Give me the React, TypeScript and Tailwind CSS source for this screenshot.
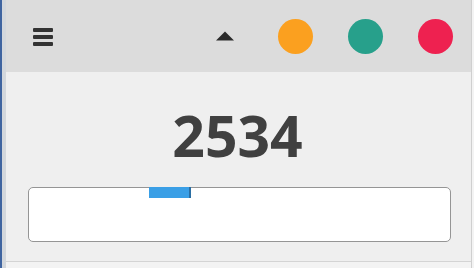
import React from "react";

export default function App() {
  return (
    <div className="flex w-[474px] h-[268px] overflow-hidden bg-[#f3f3f3]" style={{ fontFamily: '"Open Sans", "Noto Sans", sans-serif' }}>
      <div className="w-[2px] h-full bg-[#3f64a0]" />
      <div className="w-[4px] h-full bg-[#d3d7dc]" />
      <div className="flex flex-col w-[466px] h-full border-r border-[#cfcfcf]">
        <div className="flex items-center h-[72px] bg-[#dcdcdc] pl-[27px] pr-[18px]">
          <div className="flex flex-col gap-[3px] mt-[1px]">
            <div className="w-[20px] h-[4px] rounded-[1px] bg-[#333333]" />
            <div className="w-[20px] h-[4px] rounded-[1px] bg-[#333333]" />
            <div className="w-[20px] h-[4px] rounded-[1px] bg-[#333333]" />
          </div>
          <svg className="ml-auto" width="20" height="10" viewBox="0 0 20 10">
            <path d="M10 0.5 L19 9.5 L1 9.5 Z" fill="#2b2b2b" />
          </svg>
          <div className="ml-[43px] w-[35px] h-[35px] rounded-full bg-[#fba01f]" />
          <div className="ml-[35px] w-[35px] h-[35px] rounded-full bg-[#27a08b]" />
          <div className="ml-[35px] w-[35px] h-[35px] rounded-full bg-[#ee2150]" />
        </div>
        <div className="flex flex-col items-center h-[190px] bg-[#efefef] border-b border-[#d4d4d4] pt-[35px]">
          <div className="text-[57px] leading-none font-bold text-[#404040] ml-[-2px]">2534</div>
          <div className="relative mt-[23px] w-[423px] h-[55px] ml-[1px] bg-white border border-[#959595] rounded-[5px]">
            <div className="absolute left-[120px] top-[-1px] w-[42px] h-[11px] bg-[#3a9fe6] border-r-[2px] border-[#2a6ea3]" />
          </div>
        </div>
      </div>
    </div>
  );
}
